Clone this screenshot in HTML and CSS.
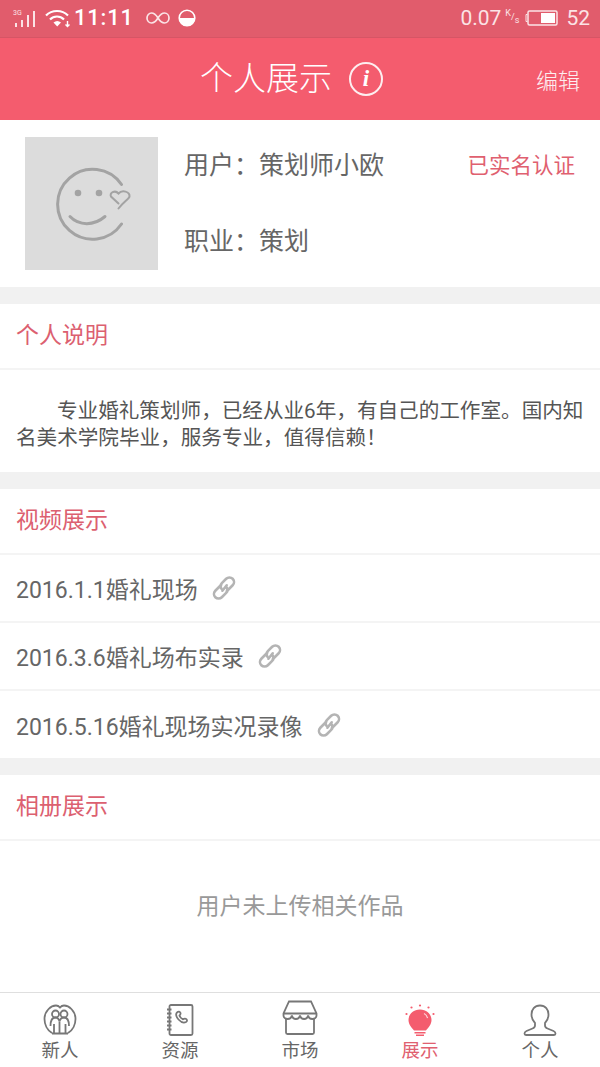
FILE: index.html
```html
<!DOCTYPE html>
<html lang="zh-CN">
<head>
  <meta charset="UTF-8">
  <meta name="viewport" content="width=device-width, initial-scale=1.0">
  <title>个人展示</title>
  <link rel="stylesheet" href="styles.css">
</head>
<body>
  <div class="status-bar">
    <div class="status-left">
      <svg class="ico-signal" width="26" height="20" viewBox="0 0 26 20">
        <text x="0" y="7" class="net-label">3G</text>
        <g stroke="#fbe3e6" stroke-width="2" fill="none">
          <path d="M2 19v-4M8 19v-7M14 19V7M20 19V3" transform="translate(1 0)"/>
        </g>
      </svg>
      <svg class="ico-wifi" width="26" height="20" viewBox="0 0 26 20">
        <g fill="none" stroke="#fff" stroke-width="2.2">
          <path d="M1 7.5C7 1.5 17 1.5 23 7.5"/>
          <path d="M5 11.5C9 7.5 15 7.5 19 11.5"/>
        </g>
        <path d="M8.5 14.5C11 12.5 13.5 12.5 16 14.5L12.2 18.5z" fill="#fff"/>
        <path d="M22.5 13v5M20.5 16.5l2 2 2-2" fill="none" stroke="#fff" stroke-width="1.4"/>
      </svg>
      <span class="clock">11:11</span>
      <svg class="ico-inf" width="24" height="14" viewBox="0 0 24 14">
        <path d="M12 7C9.5 3 7.5 2 5.5 2 3 2 1 4.2 1 7s2 5 4.5 5c2 0 4-1 6.500-5s4.500-5 6.500-5c2.500 0 4.500 2.200 4.500 5s-2 5-4.500 5c-2 0-4-1-6.500-5z" fill="none" stroke="#fbe3e6" stroke-width="1.7"/>
      </svg>
      <svg class="ico-half" width="18" height="18" viewBox="0 0 18 18">
        <circle cx="9" cy="9" r="7.800" fill="none" stroke="#fff" stroke-width="1.6"/>
        <path d="M1 9a8 8 0 0 0 16 0z" fill="#fff"/>
      </svg>
    </div>
    <div class="status-right">
      <span class="speed">0.07</span>
      <span class="speed-unit"><sup>K</sup>/<sub>s</sub></span>
      <svg class="ico-batt" width="33" height="16" viewBox="0 0 33 16">
        <path d="M2.500 4.500h-1.500v7h1.500" fill="none" stroke="#fbe3e6" stroke-width="1"/>
        <rect x="3" y="1" width="29" height="14" rx="1.500" fill="none" stroke="#fbe3e6" stroke-width="1.500"/>
        <rect x="16" y="3" width="14" height="10" fill="#fff"/>
      </svg>
      <span class="batt-num">52</span>
    </div>
  </div>

  <header class="top-bar">
    <div class="title-wrap">
      <h1>个人展示</h1>
      <span class="info-badge">i</span>
    </div>
    <a class="edit-link">编辑</a>
  </header>

  <section class="profile">
    <div class="avatar">
      <svg width="80" height="76" viewBox="0 0 80 76">
        <g fill="none" stroke="#a3a3a3" stroke-width="3" stroke-linecap="round">
          <path d="M69.500 17.500A35 35 0 1 0 69.500 57"/>
          <path d="M18 49.500C27 59 42 59 53 49.500"/>
          <path d="M66.500 38.500L59 31.500C57 28 63 24.500 66.500 28.500C70 24.500 78 26.500 77.500 31.500C77 34 72 36.500 66.500 43.500" stroke-width="2" transform="translate(0 -2)"/>
        </g>
        <circle cx="26" cy="26" r="3.300" fill="#a3a3a3"/>
        <circle cx="47" cy="26" r="3.300" fill="#a3a3a3"/>
      </svg>
    </div>
    <div class="profile-info">
      <div class="profile-line">
        <span>用户：策划师小欧</span>
        <span class="verified">已实名认证</span>
      </div>
      <div class="profile-line">
        <span>职业：策划</span>
      </div>
    </div>
  </section>

  <section class="block">
    <h2 class="block-title">个人说明</h2>
    <p class="intro">专业婚礼策划师，已经从业6年，有自己的工作室。国内知名美术学院毕业，服务专业，值得信赖！</p>
  </section>

  <section class="block">
    <h2 class="block-title">视频展示</h2>
    <div class="video-row">
      <span>2016.1.1婚礼现场</span>
      <svg class="ico-link" viewBox="0 0 24 24"><path d="M10.500 14.500L14.500 9.500M9.500 9L4 14.500a4.200 4.200 0 0 0 6 6L14 16.500a4 4 0 0 0 .5-5M14.500 15L20 9.500a4.200 4.200 0 0 0-6-6L10 7.500a4 4 0 0 0-.5 5"/></svg>
    </div>
    <div class="video-row">
      <span>2016.3.6婚礼场布实录</span>
      <svg class="ico-link" viewBox="0 0 24 24"><path d="M10.500 14.500L14.500 9.500M9.500 9L4 14.500a4.200 4.200 0 0 0 6 6L14 16.500a4 4 0 0 0 .5-5M14.500 15L20 9.500a4.200 4.200 0 0 0-6-6L10 7.500a4 4 0 0 0-.5 5"/></svg>
    </div>
    <div class="video-row">
      <span>2016.5.16婚礼现场实况录像</span>
      <svg class="ico-link" viewBox="0 0 24 24"><path d="M10.500 14.500L14.500 9.500M9.500 9L4 14.500a4.200 4.200 0 0 0 6 6L14 16.500a4 4 0 0 0 .5-5M14.500 15L20 9.500a4.200 4.200 0 0 0-6-6L10 7.500a4 4 0 0 0-.5 5"/></svg>
    </div>
  </section>

  <section class="block block-album">
    <h2 class="block-title">相册展示</h2>
    <div class="empty-note">用户未上传相关作品</div>
  </section>

  <nav class="tab-bar">
    <a class="tab">
      <svg width="34" height="32" viewBox="0 0 34 32" class="tab-icon">
        <path d="M9 29C4 26 1.500 20 1.500 15 1.500 7 8 1.500 13 1.500c2 0 3 .8 4 2 1-1.200 2-2 4-2 5 0 11.500 5.500 11.500 13.500 0 5-2.500 11-7.500 14"/>
        <circle cx="12.500" cy="10" r="3.500"/>
        <circle cx="21" cy="10" r="3.500"/>
        <path d="M7.500 22c0-5 1-8.500 5-8.500 2.500 0 3.500 2 4 4 .5-2 1.500-4 4.500-4 4 0 5 3.500 5 8.500M11 29.500V20M16.500 29.500V18M22.500 29.500V20M9 29.500h16"/>
      </svg>
      <span>新人</span>
    </a>
    <a class="tab">
      <svg width="28" height="32" viewBox="0 0 28 32" class="tab-icon">
        <rect x="3.500" y="1" width="23" height="30" rx="1.500"/>
        <path d="M1 5.500h4.500M1 9.500h4.500M1 13.500h4.500M1 17.500h4.500M1 21.500h4.500M1 25.500h4.500"/>
        <path d="M11 8.500c1.500-1.500 3-1 3.500.5.300 1.300-.5 2-1 2.500.5 2 1.500 3 3.500 3.800.7-.5 1.500-1 2.800-.5 1.500.7 1.700 2.200.2 3.200-2 1.200-5 .2-7.500-2.500-2.500-2.800-3-5.800-1.500-7z"/>
      </svg>
      <span>资源</span>
    </a>
    <a class="tab">
      <svg width="36" height="36" viewBox="0 0 36 36" class="tab-icon">
        <path d="M7 1.500h22l5.500 12v2c0 2-2 3.500-4.200 3.500s-3.800-1.500-4.200-3.500c-.4 2-2 3.500-4 3.500s-3.700-1.500-4.100-3.500c-.4 2-2 3.500-4.100 3.500s-3.600-1.500-4-3.500c-.4 2-2 3.500-4.200 3.500S1.500 17.500 1.500 15.500v-2z"/>
        <path d="M1.500 13.500h33M4 19v13.500c0 1 .6 1.500 1.500 1.500h25c.9 0 1.500-.5 1.500-1.500V19"/>
      </svg>
      <span>市场</span>
    </a>
    <a class="tab tab-active">
      <svg width="30" height="32" viewBox="0 0 30 32" class="tab-icon-fill">
        <path d="M15 5.500C22 5.500 26.500 10.500 26.500 16c0 4.500-3 7.500-5.500 10.500H9C6.500 23.500 3.500 20.500 3.500 16 3.500 10.500 8 5.500 15 5.500z" fill="#f45c6e"/>
        <path d="M19 9.500c2 1 3.200 2.800 3.500 4.700" fill="none" stroke="#fbd0d6" stroke-width="1.300"/>
        <path d="M9.500 28h11v1.500h-11zM11 30.500h8V32h-8z" fill="#f45c6e"/>
        <circle cx="15" cy="1.500" r="1.100" fill="#f45c6e"/>
        <circle cx="6.500" cy="3.500" r="1.100" fill="#f45c6e"/>
        <circle cx="23.500" cy="3.500" r="1.100" fill="#f45c6e"/>
        <circle cx="1.500" cy="10" r="1.100" fill="#f45c6e"/>
        <circle cx="28.500" cy="10" r="1.100" fill="#f45c6e"/>
      </svg>
      <span>展示</span>
    </a>
    <a class="tab">
      <svg width="34" height="32" viewBox="0 0 34 32" class="tab-icon">
        <path d="M17 1.500c-5.500 0-8.500 4-8.500 9 0 3.500 1.500 6.500 3.500 8.500v2.500c0 1.500-1 2.500-2.500 3l-6 2.500c-1.500.7-2 1.500-2 2.500 0 1 .5 1.500 1.500 1.500h28c1 0 1.500-.5 1.500-1.500s-.5-1.800-2-2.500l-6-2.500c-1.500-.5-2.500-1.500-2.500-3V19c2-2 3.500-5 3.500-8.500 0-5-3-9-8.500-9z"/>
      </svg>
      <span>个人</span>
    </a>
  </nav>
</body>
</html>
```
FILE: styles.css
```css
* {
  box-sizing: border-box;
}
html, body {
  margin: 0;
  padding: 0;
}
body {
  width: 600px;
  height: 1067px;
  overflow: hidden;
  display: flex;
  flex-direction: column;
  font-family: Roboto, "Noto Sans CJK SC", sans-serif;
  color: #666;
  background-color: #f1f1f1;
}
h1, h2, p {
  margin: 0;
  font-weight: normal;
}

/* status bar */
.status-bar {
  height: 38px;
  padding: 0 10px 2px 13px;
  display: flex;
  align-items: center;
  justify-content: space-between;
  background-color: #e15c6c;
  border-bottom: 1px solid #d65565;
  color: #fbe3e6;
}
.status-left, .status-right {
  display: flex;
  align-items: center;
}
.net-label {
  font-size: 7px;
  fill: #fbe3e6;
}
.ico-wifi {
  margin-left: 6px;
}
.clock {
  margin-left: 3px;
  font-size: 22px;
  font-weight: 500;
  letter-spacing: 0.8px;
  color: #fff;
}
.ico-inf {
  margin-left: 12px;
}
.ico-half {
  margin-left: 8px;
}
.speed {
  font-size: 21px;
}
.speed-unit {
  margin: 0 6px 0 4px;
  font-size: 9px;
  line-height: 1;
}
.speed-unit sup, .speed-unit sub {
  font-size: 9px;
  line-height: 0;
}
.batt-num {
  margin-left: 8px;
  font-size: 21px;
}

/* header */
.top-bar {
  height: 82px;
  flex-shrink: 0;
  padding: 0 20px 0 200px;
  display: flex;
  align-items: center;
  justify-content: space-between;
  background-color: #f45c6e;
  color: #fff;
}
.title-wrap {
  display: flex;
  align-items: center;
}
.title-wrap h1 {
  font-size: 33px;
  font-weight: 300;
  line-height: 1.2;
}
.info-badge {
  width: 34px;
  height: 34px;
  margin-left: 17px;
  border: 2px solid #fdeef0;
  border-radius: 50%;
  display: flex;
  align-items: center;
  justify-content: center;
  font-family: "Liberation Serif", serif;
  font-size: 23px;
  font-weight: bold;
  font-style: italic;
}
.edit-link {
  font-size: 22px;
  font-weight: 300;
  color: #fdeef0;
}

/* profile */
.profile {
  height: 167px;
  flex-shrink: 0;
  padding: 17px 25px 0;
  display: flex;
  background: #fff;
}
.avatar {
  width: 133px;
  height: 133px;
  flex-shrink: 0;
  padding-top: 30px;
  padding-left: 27px;
  background-color: #dcdcdc;
}
.profile-info {
  flex: 1;
  padding-left: 26px;
}
.profile-line {
  height: 76px;
  padding-top: 10px;
  display: flex;
  justify-content: space-between;
  align-items: flex-start;
  font-size: 25px;
  line-height: 38px;
  color: #666;
}
.verified {
  font-size: 21.500px;
  color: #e0606f;
}

/* sections */
.block {
  margin-top: 17px;
  background: #fff;
}
.block-title {
  height: 66px;
  padding-left: 16px;
  border-bottom: 2px solid #f4f4f4;
  font-size: 23px;
  line-height: 64px;
  color: #dc6070;
}
.intro {
  height: 102px;
  padding: 28px 16px 0 16px;
  text-indent: 41px;
  font-size: 20.600px;
  line-height: 27px;
  color: #555;
}
.video-row {
  height: 68px;
  padding-left: 16px;
  display: flex;
  align-items: center;
  border-bottom: 2px solid #f4f4f4;
  font-size: 23px;
  color: #666;
}
.video-row:last-child {
  height: 67px;
  border-bottom: 0;
}
.ico-link {
  width: 26px;
  height: 26px;
  margin-left: 13px;
  fill: none;
  stroke: #b4b4b4;
  stroke-width: 2.400;
  stroke-linecap: round;
}
.block-album {
  flex: 1;
}
.empty-note {
  padding-top: 49px;
  text-align: center;
  font-size: 23px;
  line-height: 34px;
  color: #999;
}

/* tab bar */
.tab-bar {
  height: 75px;
  flex-shrink: 0;
  display: flex;
  border-top: 1px solid #dfdfdf;
  background: #fff;
}
.tab {
  flex: 1;
  height: 74px;
  display: flex;
  flex-direction: column;
  align-items: center;
  justify-content: flex-end;
  padding-bottom: 4px;
  font-size: 18.500px;
  line-height: 24px;
  color: #666;
}
.tab-icon {
  margin-bottom: 3px;
  fill: none;
  stroke: #777;
  stroke-width: 1.800;
}
.tab-icon-fill {
  margin-bottom: 3px;
}
.tab-active {
  color: #e0606f;
}
```
